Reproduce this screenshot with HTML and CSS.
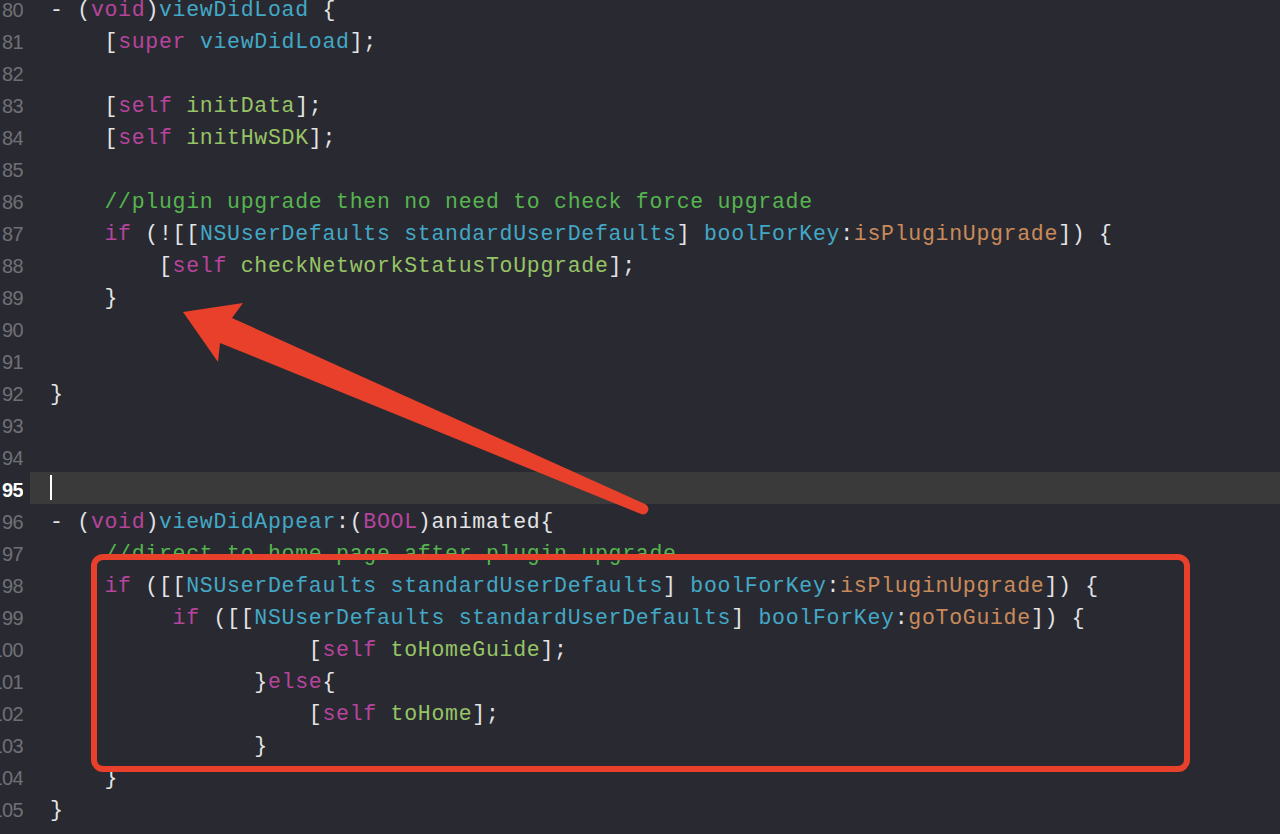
FILE: index.html
```html
<!DOCTYPE html>
<html lang="en">
<head>
    <meta charset="UTF-8">
    <meta name="viewport" content="width=device-width, initial-scale=1.0">
    <title>ViewController.m</title>
    <link rel="stylesheet" href="styles.css">
</head>
<body>
<div class="editor">
    <div class="line"><span class="num">80</span><span class="code">- (<span class="kw">void</span>)<span class="cls">viewDidLoad</span> {</span></div>
    <div class="line"><span class="num">81</span><span class="code">    [<span class="kw">super</span> <span class="cls">viewDidLoad</span>];</span></div>
    <div class="line"><span class="num">82</span><span class="code"></span></div>
    <div class="line"><span class="num">83</span><span class="code">    [<span class="kw">self</span> <span class="fn">initData</span>];</span></div>
    <div class="line"><span class="num">84</span><span class="code">    [<span class="kw">self</span> <span class="fn">initHwSDK</span>];</span></div>
    <div class="line"><span class="num">85</span><span class="code"></span></div>
    <div class="line"><span class="num">86</span><span class="code">    <span class="cm">//plugin upgrade then no need to check force upgrade</span></span></div>
    <div class="line"><span class="num">87</span><span class="code">    <span class="kw">if</span> (![[<span class="cls">NSUserDefaults</span> <span class="cls">standardUserDefaults</span>] <span class="cls">boolForKey</span>:<span class="mac">isPluginUpgrade</span>]) {</span></div>
    <div class="line"><span class="num">88</span><span class="code">        [<span class="kw">self</span> <span class="fn">checkNetworkStatusToUpgrade</span>];</span></div>
    <div class="line"><span class="num">89</span><span class="code">    }</span></div>
    <div class="line"><span class="num">90</span><span class="code"></span></div>
    <div class="line"><span class="num">91</span><span class="code"></span></div>
    <div class="line"><span class="num">92</span><span class="code">}</span></div>
    <div class="line"><span class="num">93</span><span class="code"></span></div>
    <div class="line"><span class="num">94</span><span class="code"></span></div>
    <div class="line current"><span class="num">95</span><span class="code"><span class="caret"></span></span></div>
    <div class="line"><span class="num">96</span><span class="code">- (<span class="kw">void</span>)<span class="cls">viewDidAppear</span>:(<span class="kw">BOOL</span>)animated{</span></div>
    <div class="line"><span class="num">97</span><span class="code">    <span class="cm">//direct to home page after plugin upgrade</span></span></div>
    <div class="line"><span class="num">98</span><span class="code">    <span class="kw">if</span> ([[<span class="cls">NSUserDefaults</span> <span class="cls">standardUserDefaults</span>] <span class="cls">boolForKey</span>:<span class="mac">isPluginUpgrade</span>]) {</span></div>
    <div class="line"><span class="num">99</span><span class="code">         <span class="kw">if</span> ([[<span class="cls">NSUserDefaults</span> <span class="cls">standardUserDefaults</span>] <span class="cls">boolForKey</span>:<span class="mac">goToGuide</span>]) {</span></div>
    <div class="line"><span class="num">100</span><span class="code">                   [<span class="kw">self</span> <span class="fn">toHomeGuide</span>];</span></div>
    <div class="line"><span class="num">101</span><span class="code">               }<span class="kw">else</span>{</span></div>
    <div class="line"><span class="num">102</span><span class="code">                   [<span class="kw">self</span> <span class="fn">toHome</span>];</span></div>
    <div class="line"><span class="num">103</span><span class="code">               }</span></div>
    <div class="line"><span class="num">104</span><span class="code">    }</span></div>
    <div class="line"><span class="num">105</span><span class="code">}</span></div>
    <div class="line"><span class="num">106</span><span class="code"></span></div>
</div>

<!-- Markierungen über dem Code -->
<svg class="marks" width="1280" height="834" viewBox="0 0 1280 834">
    <rect x="94" y="557" width="1093" height="212" rx="9" fill="none" stroke="#e8402a" stroke-width="6"/>
    <path d="M183,312 L243,303 L232,318 L645,504 A5,5 0 0 1 641,514 L220,343 L218,362 Z" fill="#e8402a"/>
</svg>
</body>
</html>
```

FILE: styles.css
```css
/* Editor im Dusk-Farbschema */
body {
    margin: 0;
    background-color: #292a31;
    overflow: hidden;
    height: 834px;
}
.editor {
    margin-top: -8px;
    display: flex;
    flex-direction: column;
}
.line {
    display: flex;
    height: 32px;
}
.num {
    width: 23px;
    flex: none;
    text-align: right;
    direction: rtl;
    overflow: hidden;
    font-family: "Liberation Sans", Arial, sans-serif;
    font-size: 20px;
    letter-spacing: -0.6px;
    line-height: 28px;
    padding-top: 4px;
    color: #6f7075;
}
.code {
    flex: 1;
    margin-left: 7px;
    padding-left: 20px;
    white-space: pre;
    font-family: "Liberation Mono", "DejaVu Sans Mono", monospace;
    font-size: 21.5px;
    letter-spacing: 0.72px;
    line-height: 28px;
    padding-top: 4px;
    color: #e4e4e6;
    position: relative;
}
.current .num {
    color: #ffffff;
    font-weight: bold;
}
.current .code {
    background-color: #3a3a3b;
}
.caret {
    position: absolute;
    left: 20px;
    top: 3px;
    width: 2px;
    height: 25px;
    background-color: #ffffff;
}
.kw {
    color: #b7449c;
}
.cls {
    color: #43a8c6;
}
.fn {
    color: #97c466;
}
.cm {
    color: #56b54f;
}
.mac {
    color: #cb8a5a;
}
.marks {
    position: absolute;
    left: 0;
    top: 0;
}
```
